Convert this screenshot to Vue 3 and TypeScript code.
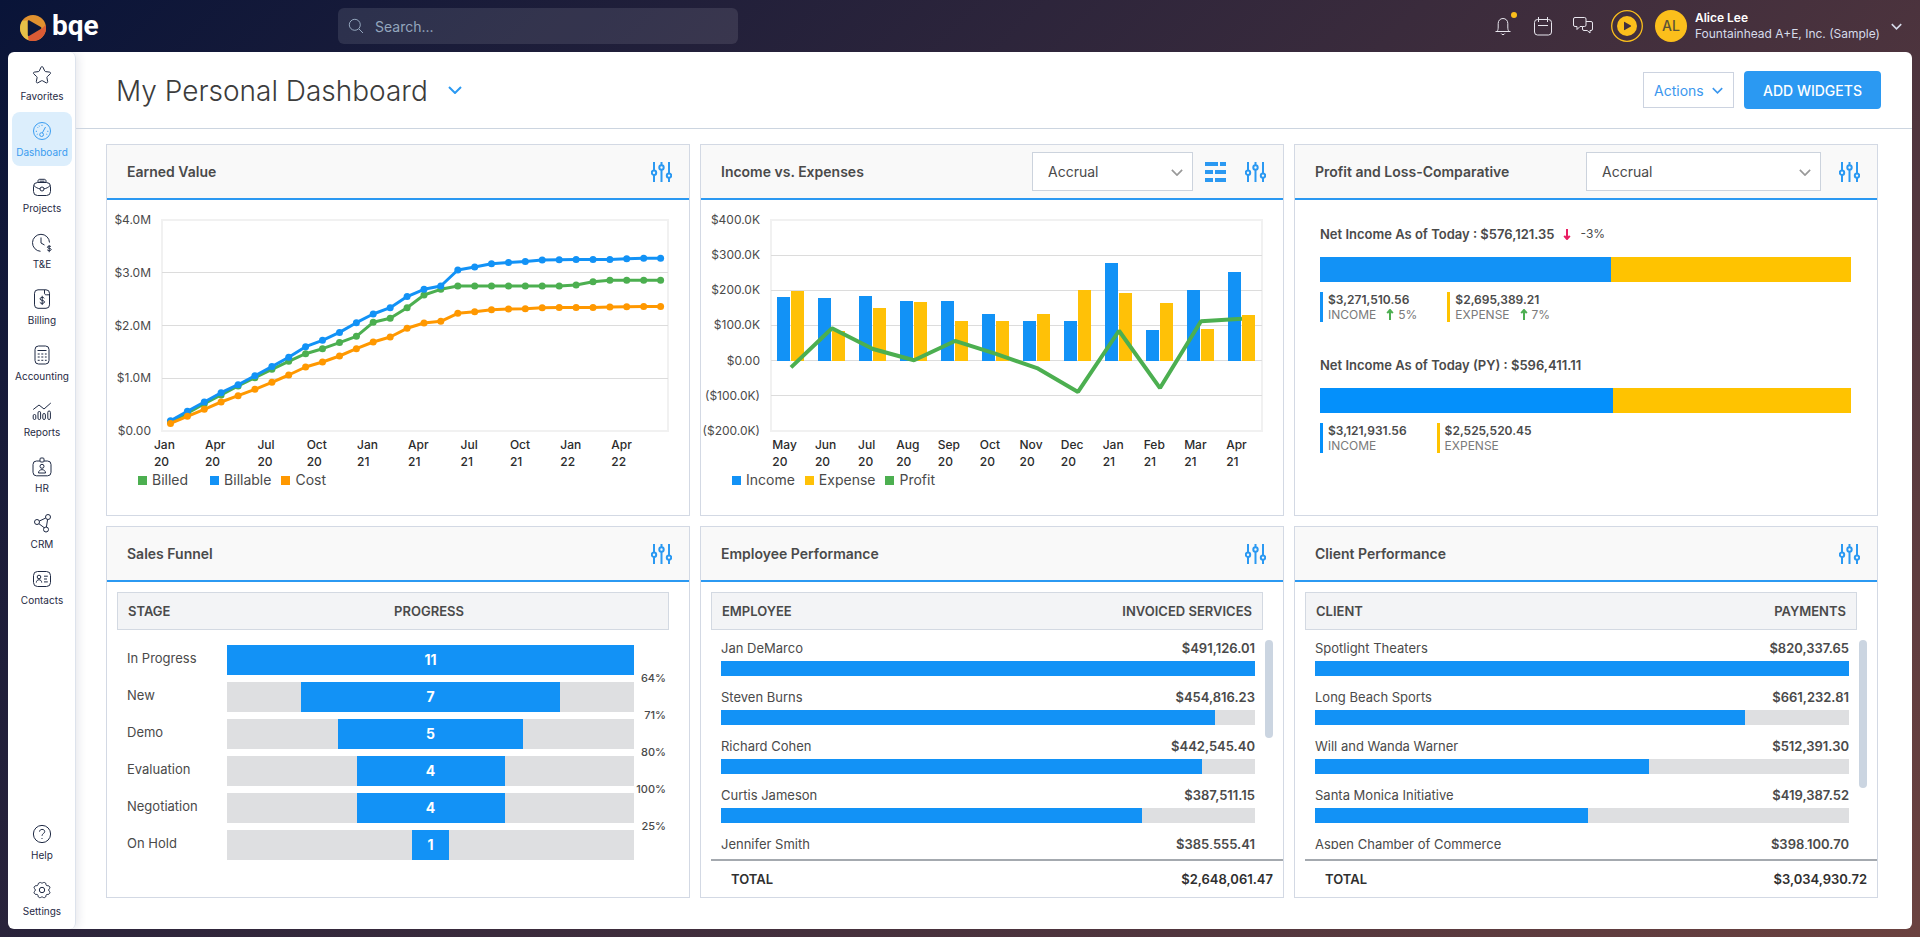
<script setup lang="ts">
import { ref } from 'vue'

interface NavItem { id: string; label: string }
interface Series { name: string; color: string; values: number[] }
interface Performer { name: string; amount: string; share: number }

const topNav: NavItem[] = [
  { id: 'star', label: 'Favorites' },
  { id: 'gauge', label: 'Dashboard' },
  { id: 'case', label: 'Projects' },
  { id: 'time', label: 'T&E' },
  { id: 'bill', label: 'Billing' },
  { id: 'calc', label: 'Accounting' },
  { id: 'chart', label: 'Reports' },
  { id: 'badge', label: 'HR' },
  { id: 'nodes', label: 'CRM' },
  { id: 'card', label: 'Contacts' },
]
const bottomNav: NavItem[] = [
  { id: 'help', label: 'Help' },
  { id: 'gear', label: 'Settings' },
]
const active = ref('Dashboard')
const search = ref('')
const basisIncome = ref('Accrual')
const basisProfit = ref('Accrual')

// Earned value, in thousands of dollars per month
const earned: Series[] = [
  {
    name: 'Billed', color: '#4caf50',
    values: [177, 335, 518, 682, 853, 1011, 1169, 1321, 1466, 1561, 1675, 1795, 2060, 2136, 2338, 2578, 2686,
      2749, 2749, 2749, 2749, 2749, 2749, 2749, 2768, 2831, 2856, 2856, 2856, 2856],
  },
  {
    name: 'Billable', color: '#1292f6',
    values: [196, 373, 550, 727, 878, 1049, 1220, 1397, 1599, 1719, 1870, 2054, 2218, 2338, 2547, 2686, 2749,
      3052, 3109, 3172, 3197, 3216, 3242, 3248, 3254, 3254, 3254, 3267, 3273, 3273],
  },
  {
    name: 'Cost', color: '#ff9800',
    values: [145, 278, 411, 550, 670, 790, 923, 1062, 1213, 1308, 1422, 1561, 1687, 1782, 1946, 2047, 2079,
      2231, 2262, 2300, 2313, 2319, 2338, 2344, 2344, 2344, 2351, 2357, 2363, 2363],
  },
]
const earnedTicks = ['$4.0M', '$3.0M', '$2.0M', '$1.0M', '$0.00']
const earnedMonths = ['Jan 20', 'Apr 20', 'Jul 20', 'Oct 20', 'Jan 21', 'Apr 21', 'Jul 21', 'Oct 21', 'Jan 22', 'Apr 22']
const ex = (i: number) => Math.round(((i + 0.5) * (507 / 30) + 1) * 10) / 10
const ey = (v: number) => Math.round((212 - (v * 211) / 4000) * 10) / 10
const linePoints = (s: Series) => s.values.map((v, i) => `${ex(i)},${ey(v)}`).join(' ')

// Income and expenses, in thousands of dollars per month
const income = [182, 178, 186, 171, 172, 135, 115, 115, 278, 88, 203, 252]
const expense = [200, 85, 152, 169, 115, 115, 135, 203, 192, 165, 90, 132]
const incomeTicks = ['$400.0K', '$300.0K', '$200.0K', '$100.0K', '$0.00', '($100.0K)', '($200.0K)']
const incomeMonths = ['May 20', 'Jun 20', 'Jul 20', 'Aug 20', 'Sep 20', 'Oct 20', 'Nov 20', 'Dec 20', 'Jan 21', 'Feb 21', 'Mar 21', 'Apr 21']
const incomeLegend = [
  { name: 'Income', color: '#1292f6' },
  { name: 'Expense', color: '#ffc107' },
  { name: 'Profit', color: '#4caf50' },
]
const barHeight = (v: number) => Math.round((v * 211) / 600)
const zeroY = 142
const profitPoints = income
  .map((v, i) => `${i * 41 + 21},${zeroY - ((v - expense[i]) * 211) / 600}`)
  .join(' ')

const comparisons = [
  {
    title: 'Net Income As of Today : $576,121.35', change: '-3%', share: 54.8, tone: 'tone-a',
    parts: [
      { kind: 'income', amount: '$3,271,510.56', label: 'INCOME', growth: '5%' },
      { kind: 'expense', amount: '$2,695,389.21', label: 'EXPENSE', growth: '7%' },
    ],
  },
  {
    title: 'Net Income As of Today (PY) : $596,411.11', change: '', share: 55.2, tone: 'tone-b',
    parts: [
      { kind: 'income', amount: '$3,121,931.56', label: 'INCOME', growth: '' },
      { kind: 'expense', amount: '$2,525,520.45', label: 'EXPENSE', growth: '' },
    ],
  },
]

const stages = [
  { name: 'In Progress', count: 11, next: '64%' },
  { name: 'New', count: 7, next: '71%' },
  { name: 'Demo', count: 5, next: '80%' },
  { name: 'Evaluation', count: 4, next: '100%' },
  { name: 'Negotiation', count: 4, next: '25%' },
  { name: 'On Hold', count: 1, next: '' },
]

const rankings: { title: string; who: string; what: string; total: string; thumb: number; rows: Performer[] }[] = [
  {
    title: 'Employee Performance', who: 'EMPLOYEE', what: 'INVOICED SERVICES', total: '$2,648,061.47', thumb: 47,
    rows: [
      { name: 'Jan DeMarco', amount: '$491,126.01', share: 100 },
      { name: 'Steven Burns', amount: '$454,816.23', share: 92.6 },
      { name: 'Richard Cohen', amount: '$442,545.40', share: 90.1 },
      { name: 'Curtis Jameson', amount: '$387,511.15', share: 78.9 },
      { name: 'Jennifer Smith', amount: '$385,555.41', share: 78.5 },
    ],
  },
  {
    title: 'Client Performance', who: 'CLIENT', what: 'PAYMENTS', total: '$3,034,930.72', thumb: 71,
    rows: [
      { name: 'Spotlight Theaters', amount: '$820,337.65', share: 100 },
      { name: 'Long Beach Sports', amount: '$661,232.81', share: 80.6 },
      { name: 'Will and Wanda Warner', amount: '$512,391.30', share: 62.5 },
      { name: 'Santa Monica Initiative', amount: '$419,387.52', share: 51.1 },
      { name: 'Aspen Chamber of Commerce', amount: '$398,100.70', share: 48.5 },
    ],
  },
]
</script>

<template>
  <svg class="sprite" aria-hidden="true">
    <symbol id="i-star" viewBox="0 0 20 20"><path d="M10 1.6c.5 0 .8.3 1 .7l1.700 3.600c.2.400.5.600.9.700l4 .5c1 .1 1.300 1.200.6 1.800l-2.900 2.700c-.3.3-.4.7-.4 1l.8 4c.2.9-.8 1.600-1.600 1.200l-3.500-2c-.4-.2-.8-.2-1.200 0l-3.500 2c-.8.4-1.800-.3-1.600-1.200l.8-4c.1-.3 0-.7-.4-1L1.800 8.900c-.7-.6-.4-1.700.6-1.800l4-.5c.4-.1.7-.3.9-.7L9 2.300c.2-.4.5-.7 1-.7z" /></symbol>
    <symbol id="i-gauge" viewBox="0 0 20 20"><circle cx="10" cy="10" r="8.500" /><circle cx="9.600" cy="13.600" r="1.900" /><path d="M10.400 11.800L13.500 6M3.800 10.300h1.200M15.200 10.300h1.200M5.500 6.200l.7.700M10 3.800V5M7 4.600l.4.900M4.800 13.500l.9-.4M15.200 13.500l-.9-.4" /></symbol>
    <symbol id="i-case" viewBox="0 0 20 20"><path d="M6 5.500V4c0-1 .7-1.700 1.700-1.700h4.600c1 0 1.700.7 1.700 1.700v1.500M7.500 4.200h5" /><rect x="1.500" y="5.500" width="17" height="13" rx="4" /><path d="M1.800 8.500c2 2 4 3 6.200 3.300M18.200 8.500c-2 2-4 3-6.200 3.300" /><circle cx="10" cy="12" r="2" /></symbol>
    <symbol id="i-time" viewBox="0 0 20 20"><path d="M8.500 18.300A8.500 8.500 0 1 1 17.500 9.500M9 4.500V10l3.500 2" /><path d="M19 13.700c-.5-.8-3.600-1-3.600.5 0 1.600 3.800.6 3.800 2.300 0 1.500-3.300 1.400-4 .3M17.200 12.300v6.900" /></symbol>
    <symbol id="i-bill" viewBox="0 0 20 20"><rect x="2.500" y=".8" width="15" height="18.500" rx="3.500" /><path d="M12.500 1v3c0 1.200.6 1.800 1.800 1.800h3M12.300 9.300c-.7-1.400-4.300-1.300-4.300.6 0 2 4.500 1 4.500 3 0 2-3.900 2-4.700.4M10.200 6.800v9.200" /></symbol>
    <symbol id="i-calc" viewBox="0 0 20 20"><rect x="3" y="1" width="14" height="18" rx="3.500" /><path d="M5.500 5.500h9" /><path stroke-dasharray="2 1.600" d="M5.700 9h9M5.700 12h9M5.700 15.300h9" /></symbol>
    <symbol id="i-chart" viewBox="0 0 20 20"><rect x="1.200" y="13.500" width="2.600" height="5" rx="1.300" /><rect x="6" y="10.500" width="2.600" height="8" rx="1.300" /><rect x="10.800" y="12.500" width="2.600" height="6" rx="1.300" /><rect x="15.800" y="10" width="2.600" height="8.500" rx="1.300" /><path d="M1.200 8.500l5.800-4.500 5 4L18.800 2" /></symbol>
    <symbol id="i-badge" viewBox="0 0 20 20"><path d="M8 4H4.500A3.500 3.500 0 0 0 1 7.500v7.800a3.500 3.500 0 0 0 3.500 3.500h11a3.500 3.500 0 0 0 3.500-3.500V7.500A3.500 3.500 0 0 0 15.500 4H12" /><rect x="8" y="1" width="4" height="4" rx="1" /><circle cx="10" cy="9.300" r="2" /><path d="M6.500 16c0-4.500 7-4.500 7 0z" /></symbol>
    <symbol id="i-nodes" viewBox="0 0 20 20"><circle cx="5" cy="9" r="2.500" /><circle cx="16" cy="4" r="2.500" /><circle cx="14" cy="16.500" r="2.500" /><path d="M7.400 8l6.200-2.900M6.900 10.700l5.300 4M15.600 6.500l-1.200 7.500" /></symbol>
    <symbol id="i-card" viewBox="0 0 20 20"><rect x="1.500" y="2.500" width="17" height="15" rx="4" /><circle cx="7" cy="8" r="1.800" /><path d="M4.300 13.600c0-3.800 5.400-3.800 5.400 0M12 7.200h3.800M12 10h3M12 12.900h3.800" /></symbol>
    <symbol id="i-help" viewBox="0 0 20 20"><circle cx="10" cy="10" r="8.600" /><path d="M7.500 7.600c.2-3 5.300-2.900 5.200 0 0 2-2.700 1.900-2.700 4.200M10 14v1" /></symbol>
    <symbol id="i-gear" viewBox="0 0 20 20"><circle cx="10" cy="10" r="2.700" /><path d="M7.800 2.600c.8-.5 1.200.5 2.200.5s1.400-1 2.600-.6c2 .6.9 2.200 1.800 2.900.9.700 2.300-.4 3.300 1.400 1 1.900-1 1.500-1 3.200s2 1.500 1 3.300c-1 1.800-2.400.7-3.300 1.400-.9.700.2 2.300-1.800 2.900-1.200.4-1.600-.7-2.600-.7s-1.400 1.100-2.600.7c-2-.6-.9-2.200-1.800-2.900-.9-.7-2.300.4-3.300-1.400-1-1.800 1-1.600 1-3.300s-2-1.400-1-3.200c1-1.800 2.400-.7 3.300-1.400.9-.7-.2-2.200 2.200-2.800z" /></symbol>
    <symbol id="i-sliders" viewBox="0 0 21 20"><path d="M3 0v8.200M3 13v7M10.500 0v3M10.500 8v12M18 0v11.200M18 16v4" /><circle cx="3" cy="10.700" r="2.200" /><circle cx="10.500" cy="5.500" r="2.200" /><circle cx="18" cy="13.600" r="2.200" /></symbol>
    <symbol id="i-chevron" viewBox="0 0 14 8"><path d="M1 1l6 6 6-6" /></symbol>
  </svg>

  <div class="app">
    <header class="topbar">
      <a class="logo" href="#" aria-label="bqe home">
        <svg class="logo-mark" viewBox="0 0 26 26" aria-hidden="true">
          <circle cx="13" cy="13" r="13" fill="#e0912f" />
          <path fill="#e6c048" d="M2.300 5.700A13 13 0 0 0 9.500 25.500L8 20 7.500 5.500z" />
          <path fill="#db5b35" d="M25.600 10A13 13 0 0 1 8.500 25.200L8 21 22 13.500z" />
          <path fill="#0d173a" d="M7.800 6.300c0-1 .9-1.200 1.600-.8L20.800 12c.8.5.8 1.500 0 2L9.400 20.800c-.8.4-1.600 0-1.600-.9z" />
        </svg>
        <span>bqe</span>
      </a>
      <label class="search">
        <svg viewBox="0 0 16 16" aria-hidden="true"><circle cx="6.800" cy="6.800" r="5.500" /><path d="M11 11l4 4" /></svg>
        <input v-model="search" type="text" placeholder="Search..." aria-label="Search">
      </label>
      <div class="tools">
        <button class="tool" aria-label="Notifications">
          <svg viewBox="0 0 20 20"><path d="M2.500 15.500h15M4 15.500c1-1.200 1.200-2.700 1.200-4.500V7.500c0-3 2-5 4.800-5s4.800 2 4.800 5V11c0 1.800.2 3.300 1.200 4.500M8.200 17.500c.6 1.500 3 1.500 3.600 0" /></svg>
          <i class="dot"></i>
        </button>
        <button class="tool" aria-label="Calendar">
          <svg viewBox="0 0 20 20"><rect x="1.500" y="3.500" width="17" height="15.500" rx="3" /><path d="M5.500 1v5M14.500 1v5M5 9.500h10" /></svg>
        </button>
        <button class="tool" aria-label="Messages">
          <svg viewBox="0 0 20 20"><path d="M9.500 10.500H7l-3 3v-3H2A1.500 1.500 0 0 1 .5 9V3A1.500 1.500 0 0 1 2 1.500h9.500A1.500 1.500 0 0 1 13 3v6a1.500 1.500 0 0 1-1.500 1.500zM13 5.500h5A1.500 1.500 0 0 1 19.500 7v6a1.500 1.500 0 0 1-1.500 1.500h-1V17l-2.800-2.500H11A1.500 1.500 0 0 1 9.500 13v-2.500" /></svg>
        </button>
        <button class="play" aria-label="Start timer">
          <svg viewBox="0 0 32 32"><circle cx="16" cy="16" r="15.300" fill="none" stroke="#fbbf1c" stroke-width="1.300" /><circle cx="16" cy="16" r="10" fill="#fbbf1c" stroke="none" /><path d="M13 12.300v7.400c0 .4.400.6.700.4l6.200-3.700c.3-.2.3-.6 0-.8l-6.200-3.700c-.3-.2-.7 0-.7.400z" fill="#40303f" stroke="none" /></svg>
        </button>
        <span class="avatar">AL</span>
        <div class="user"><strong>Alice Lee</strong><span>Fountainhead A+E, Inc. (Sample)</span></div>
        <button class="user-menu" aria-label="Account menu"><svg><use href="#i-chevron" /></svg></button>
      </div>
    </header>

    <div class="shell">
      <nav class="sidebar" aria-label="Main">
        <a v-for="n in topNav" :key="n.label" href="#" :class="['nav-item', { active: active === n.label }]" @click.prevent="active = n.label">
          <svg aria-hidden="true"><use :href="`#i-${n.id}`" /></svg><span>{{ n.label }}</span>
        </a>
        <div class="nav-gap"></div>
        <a v-for="n in bottomNav" :key="n.label" href="#" class="nav-item" @click.prevent="active = n.label">
          <svg aria-hidden="true"><use :href="`#i-${n.id}`" /></svg><span>{{ n.label }}</span>
        </a>
      </nav>

      <main class="main">
        <div class="titlebar">
          <h1>My Personal Dashboard</h1>
          <button class="switch" aria-label="Switch dashboard"><svg><use href="#i-chevron" /></svg></button>
          <button class="actions">Actions <svg aria-hidden="true"><use href="#i-chevron" /></svg></button>
          <button class="add">ADD WIDGETS</button>
        </div>

        <div class="grid">
          <section class="widget">
            <div class="widget-head">
              <h2>Earned Value</h2>
              <button class="icon-btn" aria-label="Configure Earned Value"><svg><use href="#i-sliders" /></svg></button>
            </div>
            <div class="chart chart-earned">
              <div class="yaxis"><span v-for="t in earnedTicks" :key="t">{{ t }}</span></div>
              <svg class="plot" viewBox="0 0 508 213" role="img" aria-label="Earned value line chart">
                <rect class="frame" x="1" y="1" width="506" height="211" />
                <path class="gridline" d="M1 53.500h506M1 106.500h506M1 159.500h506" />
                <g v-for="s in earned" :key="s.name" :stroke="s.color" :fill="s.color">
                  <polyline :points="linePoints(s)" fill="none" stroke-width="3" stroke-linejoin="round" />
                  <circle v-for="(v, i) in s.values" :key="i" :cx="ex(i)" :cy="ey(v)" r="3.500" stroke="none" />
                </g>
              </svg>
              <div class="xaxis months-10">
                <span v-for="m in earnedMonths" :key="m"><b>{{ m.split(' ')[0] }}<br>{{ m.split(' ')[1] }}</b></span>
              </div>
            </div>
            <ul class="legend">
              <li v-for="s in earned" :key="s.name" :class="{ wide: s.name === 'Billed' }"><i :style="{ background: s.color }"></i>{{ s.name }}</li>
            </ul>
          </section>

          <section class="widget">
            <div class="widget-head">
              <h2>Income vs. Expenses</h2>
              <div class="select narrow">
                <select v-model="basisIncome" aria-label="Income accounting basis"><option>Accrual</option><option>Cash</option></select>
                <svg aria-hidden="true"><use href="#i-chevron" /></svg>
              </div>
              <button class="icon-btn" aria-label="Table view">
                <svg class="filled" viewBox="0 0 21 20"><path d="M0 0h13v4H0zM15 0h6v4h-6zM0 8h8v4H0zM10 8h11v4H10zM0 16h8v4H0zM10 16h11v4H10z" /></svg>
              </button>
              <button class="icon-btn" aria-label="Configure Income vs. Expenses"><svg><use href="#i-sliders" /></svg></button>
            </div>
            <div class="chart chart-income">
              <div class="yaxis"><span v-for="t in incomeTicks" :key="t">{{ t }}</span></div>
              <svg class="plot" viewBox="0 0 493 213" role="img" aria-label="Income, expense and profit by month">
                <rect class="frame" x="1" y="1" width="491" height="211" />
                <path class="gridline" d="M1 36.500h491M1 71.500h491M1 106.500h491M1 141.500h491M1 176.500h491" />
                <g v-for="(v, i) in income" :key="i" stroke="none">
                  <rect fill="#1292f6" :x="i * 41 + 7" :y="zeroY - barHeight(v)" width="13" :height="barHeight(v)" />
                  <rect fill="#ffc107" :x="i * 41 + 21" :y="zeroY - barHeight(expense[i])" width="13" :height="barHeight(expense[i])" />
                </g>
                <polyline :points="profitPoints" fill="none" stroke="#4caf50" stroke-width="4" stroke-linejoin="bevel" />
              </svg>
              <div class="xaxis months-12">
                <span v-for="m in incomeMonths" :key="m"><b>{{ m.split(' ')[0] }}<br>{{ m.split(' ')[1] }}</b></span>
              </div>
            </div>
            <ul class="legend">
              <li v-for="l in incomeLegend" :key="l.name"><i :style="{ background: l.color }"></i>{{ l.name }}</li>
            </ul>
          </section>

          <section class="widget">
            <div class="widget-head">
              <h2>Profit and Loss-Comparative</h2>
              <div class="select wide">
                <select v-model="basisProfit" aria-label="Profit accounting basis"><option>Accrual</option><option>Cash</option></select>
                <svg aria-hidden="true"><use href="#i-chevron" /></svg>
              </div>
              <button class="icon-btn" aria-label="Configure Profit and Loss"><svg><use href="#i-sliders" /></svg></button>
            </div>
            <div class="compare">
              <div v-for="c in comparisons" :key="c.title" class="compare-item">
                <h3>{{ c.title }}
                  <template v-if="c.change">
                    <svg class="arrow down" viewBox="0 0 8 12" aria-hidden="true"><path d="M4 1v10M1.200 7.800L4 11l2.800-3.200" /></svg>
                    <span>{{ c.change }}</span>
                  </template>
                </h3>
                <div :class="['split', c.tone]"><div :style="{ width: c.share + '%' }"></div></div>
                <div class="parts">
                  <div v-for="p in c.parts" :key="p.kind" :class="['part', p.kind, c.tone]">
                    <strong>{{ p.amount }}</strong>
                    <span>{{ p.label }}<template v-if="p.growth"><svg class="arrow up" viewBox="0 0 8 12" aria-hidden="true"><path d="M4 11V1M1.200 4.200L4 1l2.800 3.200" /></svg><em>{{ p.growth }}</em></template></span>
                  </div>
                </div>
              </div>
            </div>
          </section>

          <section class="widget">
            <div class="widget-head">
              <h2>Sales Funnel</h2>
              <button class="icon-btn" aria-label="Configure Sales Funnel"><svg><use href="#i-sliders" /></svg></button>
            </div>
            <table class="funnel">
              <thead><tr><th>STAGE</th><th>PROGRESS</th></tr></thead>
              <tbody>
                <tr v-for="s in stages" :key="s.name">
                  <td>{{ s.name }}</td>
                  <td class="track"><div :style="{ width: (s.count / 11) * 100 + '%' }">{{ s.count }}</div></td>
                  <td class="next">{{ s.next }}</td>
                </tr>
              </tbody>
            </table>
          </section>

          <section v-for="r in rankings" :key="r.title" class="widget">
            <div class="widget-head">
              <h2>{{ r.title }}</h2>
              <button class="icon-btn" :aria-label="`Configure ${r.title}`"><svg><use href="#i-sliders" /></svg></button>
            </div>
            <table class="ranking">
              <thead><tr><th>{{ r.who }}</th><th>{{ r.what }}</th></tr></thead>
              <tbody>
                <tr v-for="p in r.rows" :key="p.name">
                  <td>{{ p.name }}</td>
                  <td class="amount">{{ p.amount }}</td>
                  <td class="meter"><div :style="{ width: p.share + '%' }"></div></td>
                </tr>
              </tbody>
              <tfoot><tr><td>TOTAL</td><td>{{ r.total }}</td></tr></tfoot>
            </table>
            <div class="scroll" aria-hidden="true"><div :style="{ height: r.thumb + '%' }"></div></div>
          </section>
        </div>
      </main>
    </div>
  </div>
</template>

<style>
body {
  margin: 0;
}
</style>

<style scoped>
.app {
  display: flex;
  flex-direction: column;
  min-height: 100vh;
  box-sizing: border-box;
  padding: 0 8px 8px;
  background: linear-gradient(135deg, #091438, #6b4240);
  font-family: Inter, "Liberation Sans", sans-serif;
  font-size: 13px;
  color: #4a4a4a;
}
.app *, .app *::before {
  box-sizing: border-box;
}
.sprite {
  position: absolute;
  width: 0;
  height: 0;
}
svg {
  display: block;
  fill: none;
  stroke: currentColor;
}
button {
  padding: 0;
  border: 0;
  background: none;
  font: inherit;
  color: inherit;
  cursor: pointer;
}
h1, h2, h3, ul {
  margin: 0;
  padding: 0;
}

/* Top bar */
.topbar {
  display: flex;
  align-items: center;
  height: 52px;
}
.logo {
  display: flex;
  align-items: center;
  gap: 6px;
  width: 318px;
  height: 52px;
  padding-left: 12px;
  font: 700 28px/44px Roboto, "Open Sans", sans-serif;
  color: #fff;
  text-decoration: none;
}
.logo-mark {
  width: 26px;
  height: 26px;
  margin-top: 4px;
  stroke: none;
}
.search {
  display: flex;
  align-items: center;
  gap: 11px;
  width: 400px;
  height: 36px;
  margin-left: 12px;
  padding: 0 10px;
  border-radius: 6px;
  background: rgba(255, 255, 255, 0.1);
  color: #94a6bd;
}
.search svg {
  width: 16px;
  height: 16px;
}
.search input {
  flex: 1;
  min-width: 0;
  padding: 2px 0 0;
  border: 0;
  outline: 0;
  background: none;
  font: 14px/20px Inter, "Liberation Sans", sans-serif;
  color: #fff;
}
.search input::placeholder {
  color: #94a6bd;
  opacity: 1;
}
.tools {
  display: flex;
  align-items: center;
  margin-left: auto;
}
.tool {
  position: relative;
  width: 20px;
  margin-right: 20px;
  color: #e8e6ee;
}
.tool svg {
  width: 20px;
  height: 20px;
}
.dot {
  position: absolute;
  top: -4px;
  right: -4px;
  width: 6px;
  height: 6px;
  border-radius: 50%;
  background: #fbbf1c;
}
.play {
  width: 32px;
  height: 32px;
  margin: 0 12px 0 -2px;
}
.avatar {
  width: 32px;
  border-radius: 50%;
  background: #fbbf1c;
  font-size: 14px;
  font-weight: 500;
  line-height: 32px;
  text-align: center;
  color: #5c5236;
}
.user {
  margin-left: 8px;
  font-size: 12px;
  line-height: 16px;
  color: #d6dbea;
}
.user strong, .user span {
  display: block;
}
.user strong {
  font-weight: 600;
  color: #fff;
}
.user-menu {
  margin: 0 10px 0 11px;
  color: #d6dbea;
}
.user-menu svg {
  width: 11px;
  height: 7px;
  stroke-width: 2;
}

/* Page shell */
.shell {
  display: flex;
  flex: 1;
  overflow: hidden;
  border-radius: 6px;
  background: #fff;
}
.sidebar {
  display: flex;
  flex-direction: column;
  flex: none;
  gap: 2px;
  width: 68px;
  padding: 4px 3px 4px 4px;
  border-right: 1px solid #dde3ec;
  border-radius: 6px;
  box-shadow: 2px 0 10px rgba(40, 50, 90, 0.12);
}
.nav-item {
  display: flex;
  flex-direction: column;
  align-items: center;
  height: 54px;
  padding-top: 9px;
  border-radius: 8px;
  font-size: 10px;
  line-height: 14px;
  color: #1f2a44;
  text-decoration: none;
}
.nav-item svg {
  width: 20px;
  height: 20px;
  margin-bottom: 4px;
}
.nav-item.active {
  background: #dceefc;
  color: #3a9cf0;
}
.nav-gap {
  flex: 1;
}
.main {
  flex: 1;
  min-width: 0;
}
.titlebar {
  display: flex;
  align-items: center;
  height: 77px;
  padding: 0 31px 0 40px;
  border-bottom: 1px solid #ccd5e0;
}
h1 {
  padding-top: 2px;
  font-size: 28px;
  font-weight: 300;
  line-height: 36px;
  color: #3c3c3c;
}
.switch {
  margin-left: 20px;
  margin-right: auto;
  color: #2b99f2;
}
.switch svg {
  width: 14px;
  height: 8px;
  stroke-width: 2;
}
.actions {
  display: flex;
  align-items: center;
  justify-content: space-between;
  width: 91px;
  height: 36px;
  margin-right: 10px;
  padding: 0 10px;
  border: 1px solid #ccd3e0;
  font-size: 14px;
  color: #3b97ee;
}
.actions svg {
  width: 11px;
  height: 7px;
  stroke-width: 2;
}
.add {
  width: 137px;
  height: 38px;
  border-radius: 4px;
  background: #2b99f2;
  font-size: 14px;
  font-weight: 500;
  color: #fff;
}

/* Widgets */
.grid {
  display: grid;
  grid-template-columns: repeat(3, minmax(0, 1fr));
  gap: 10px;
  padding: 15px 34px 31px 30px;
}
.widget {
  position: relative;
  min-height: 372px;
  border: 1px solid #d3d9e4;
  background: #fff;
}
.widget-head {
  display: flex;
  align-items: center;
  gap: 19px;
  height: 55px;
  padding: 0 17px 0 20px;
  border-bottom: 2px solid #2b99f2;
  background: #f9f9f9;
}
h2 {
  flex: 1;
  font-size: 14px;
  font-weight: 600;
  line-height: 20px;
}
.icon-btn {
  color: #2b99f2;
}
.icon-btn svg {
  width: 21px;
  height: 20px;
  stroke-width: 2;
}
.icon-btn svg.filled {
  fill: currentColor;
  stroke: none;
}
.select {
  position: relative;
  height: 39px;
}
.select.narrow {
  width: 161px;
  margin-right: -7px;
}
.select.wide {
  width: 235px;
  margin-right: -1px;
}
.select select {
  width: 100%;
  height: 100%;
  padding: 0 15px;
  border: 1px solid #ccd3dd;
  border-radius: 0;
  appearance: none;
  background: #fff;
  font: 14px/20px Inter, "Liberation Sans", sans-serif;
  color: #4a4a4a;
}
.select svg {
  position: absolute;
  top: 17px;
  right: 10px;
  width: 12px;
  height: 7px;
  stroke-width: 2;
  color: #999;
  pointer-events: none;
}

/* Charts */
.chart {
  display: grid;
  padding: 19px 20px 0 0;
  column-gap: 10px;
}
.chart-earned {
  grid-template-columns: 44px minmax(0, 1fr);
}
.chart-income {
  grid-template-columns: 59px minmax(0, 1fr);
}
.yaxis {
  display: flex;
  flex-direction: column;
  justify-content: space-between;
  margin: -7px 0 -7px;
  font-size: 12px;
  line-height: 16px;
  text-align: right;
}
.plot {
  width: 100%;
}
.frame {
  stroke: #f1f1f1;
  stroke-width: 2;
}
.gridline {
  stroke: #dcdcdc;
}
.xaxis {
  display: grid;
  grid-column: 2;
  margin-top: 4px;
  line-height: 17px;
  font-size: 12px;
  color: #2b2b2b;
}
.xaxis span {
  display: flex;
  justify-content: center;
}
.xaxis b {
  font-weight: 500;
}
.months-10 {
  grid-template-columns: repeat(10, minmax(0, 1fr));
  margin-left: -22px;
  margin-right: 22px;
}
.months-12 {
  grid-template-columns: repeat(12, minmax(0, 1fr));
  margin-left: -6px;
  margin-right: 6px;
}
.legend {
  display: flex;
  gap: 10px;
  padding: 0 0 0 31px;
  font-size: 14px;
  line-height: 20px;
  list-style: none;
}
.legend li {
  display: flex;
  align-items: center;
  gap: 5px;
}
.legend li.wide {
  margin-right: 12px;
}
.legend i {
  width: 9px;
  height: 9px;
}

/* Profit and loss */
.compare {
  padding: 24px 26px 0 25px;
}
.compare-item + .compare-item {
  margin-top: 33px;
}
h3 {
  display: flex;
  align-items: center;
  font-size: 13px;
  font-weight: 600;
  line-height: 20px;
}
h3 span {
  font-size: 12px;
  font-weight: 400;
}
.arrow {
  width: 8px;
  height: 12px;
  stroke-width: 2;
}
.arrow.down {
  margin: 0 10px 0 8px;
  color: #e91e63;
}
.arrow.up {
  margin: 0 4px 0 10px;
  color: #4caf50;
}
.split {
  height: 25px;
  margin: 13px 0 10px;
  background: #ffc300;
}
.tone-a {
  --income: #1292f6;
}
.tone-b {
  --income: #0490fb;
}
.split div {
  height: 100%;
  background: var(--income);
}
.parts {
  display: flex;
  gap: 30px;
}
.part {
  padding-left: 5px;
  border-left: 3px solid var(--income);
  font-size: 12px;
  line-height: 15px;
  color: #7a7a7a;
}
.part.expense {
  border-left-color: #ffc300;
}
.part strong {
  display: block;
  font-weight: 600;
  color: #4a4a4a;
}
.part span {
  display: flex;
  align-items: center;
}
.part em {
  font-style: normal;
}

/* Tables */
table, thead, tbody, tfoot {
  display: block;
}
thead tr {
  display: flex;
  align-items: center;
  justify-content: space-between;
  height: 38px;
  margin: 10px 20px 0 10px;
  padding: 0 10px;
  border: 1px solid #d3d9e2;
  background: #f3f4f6;
}
th, td {
  display: block;
  padding: 0;
}
th {
  font-weight: 600;
  line-height: 20px;
  text-align: left;
}
.funnel tbody {
  padding: 15px 23px 0 20px;
}
.funnel thead tr {
  display: grid;
  grid-template-columns: 80px minmax(0, 1fr) 8px;
}
.funnel thead th + th {
  text-align: center;
}
.funnel tbody tr {
  display: grid;
  grid-template-columns: 100px minmax(0, 1fr) 32px;
  height: 37px;
}
.funnel td {
  line-height: 26px;
}
.funnel .track {
  height: 30px;
  background: #dedfe1;
}
.track div {
  height: 30px;
  margin: 0 auto;
  background: #1292f6;
  font-size: 14px;
  font-weight: 700;
  line-height: 30px;
  text-align: center;
  color: #fff;
}
.funnel .next {
  padding-top: 25px;
  font-size: 11px;
  font-weight: 500;
  line-height: 16px;
  text-align: right;
}
.ranking tbody {
  height: 219px;
  padding: 8px 28px 0 20px;
  overflow: hidden;
}
.ranking tbody tr {
  display: grid;
  grid-template-columns: 1fr auto;
  align-content: start;
  height: 49px;
}
.ranking td {
  line-height: 20px;
}
.ranking .amount {
  font-weight: 600;
}
.meter {
  grid-column: 1 / 3;
  height: 15px;
  margin-top: 3px;
  background: #dedfe1;
}
.meter div {
  height: 15px;
  background: #1292f6;
}
.ranking tfoot tr {
  display: flex;
  justify-content: space-between;
  margin: 10px 0 0 10px;
  padding: 8px 10px 8px 20px;
  border-top: 2px solid #a4a9af;
  font-weight: 600;
  color: #2f2f2f;
}
.scroll {
  position: absolute;
  top: 113px;
  right: 10px;
  bottom: 49px;
  width: 8px;
}
.scroll div {
  border-radius: 4px;
  background: #cbd5e1;
}
</style>
